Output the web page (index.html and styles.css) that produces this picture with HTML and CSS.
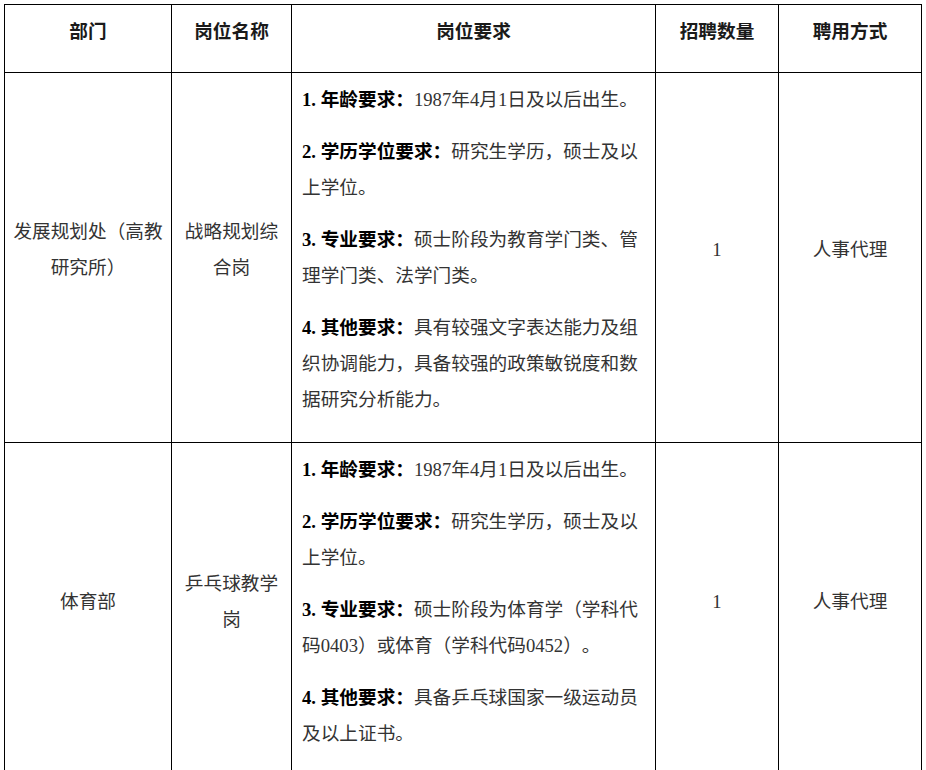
FILE: index.html
```html
<!DOCTYPE html>
<html lang="zh-CN">
<head>
<meta charset="utf-8">
<title>岗位要求</title>
<link rel="stylesheet" href="styles.css">
</head>
<body>
<table class="jobs">
  <colgroup>
    <col class="c-dept">
    <col class="c-post">
    <col class="c-req">
    <col class="c-num">
    <col class="c-way">
  </colgroup>
  <thead>
    <tr>
      <th>部门</th>
      <th>岗位名称</th>
      <th>岗位要求</th>
      <th>招聘数量</th>
      <th>聘用方式</th>
    </tr>
  </thead>
  <tbody>
    <tr>
      <td class="mid"><p>发展规划处（高教研究所）</p></td>
      <td class="mid"><p>战略规划综合岗</p></td>
      <td class="req">
        <p><b>1. 年龄要求：</b>1987年4月1日及以后出生。</p>
        <p><b>2. 学历学位要求：</b>研究生学历，硕士及以上学位。</p>
        <p><b>3. 专业要求：</b>硕士阶段为教育学门类、管理学门类、法学门类。</p>
        <p><b>4. 其他要求：</b>具有较强文字表达能力及组织协调能力，具备较强的政策敏锐度和数据研究分析能力。</p>
      </td>
      <td class="mid"><p>1</p></td>
      <td class="mid"><p>人事代理</p></td>
    </tr>
    <tr>
      <td class="mid"><p>体育部</p></td>
      <td class="mid"><p>乒乓球教学岗</p></td>
      <td class="req">
        <p><b>1. 年龄要求：</b>1987年4月1日及以后出生。</p>
        <p><b>2. 学历学位要求：</b>研究生学历，硕士及以上学位。</p>
        <p><b>3. 专业要求：</b>硕士阶段为体育学（学科代码0403）或体育（学科代码0452）。</p>
        <p><b>4. 其他要求：</b>具备乒乓球国家一级运动员及以上证书。</p>
      </td>
      <td class="mid"><p>1</p></td>
      <td class="mid"><p>人事代理</p></td>
    </tr>
  </tbody>
</table>
</body>
</html>
```

FILE: styles.css
```css
html, body {
  background: #ffffff;
}
body {
  margin: 4px 0 0 4px;
  font-family: "Liberation Serif", "Noto Sans CJK SC", serif;
  font-size: 18.67px;
  color: #333333;
  text-spacing-trim: space-all;
}
.jobs {
  border-collapse: collapse;
  table-layout: fixed;
  width: 917px;
}
.c-dept { width: 167px; }
.c-post { width: 120px; }
.c-req { width: 364px; }
.c-num { width: 123px; }
.c-way { width: 143px; }

.jobs th,
.jobs td {
  border: 1px solid #000000;
  padding: 9px 6px 8px 6px;
  line-height: 36px;
}
.jobs th {
  height: 50px;
  vertical-align: top;
  font-weight: bold;
  color: #1a1a1a;
  text-align: center;
}
.jobs td.mid {
  vertical-align: middle;
  text-align: center;
}
.jobs td.req {
  vertical-align: top;
  text-align: left;
  padding-left: 10px;
  padding-right: 8px;
}
.jobs p {
  margin: 0 0 16px 0;
}
.jobs b {
  color: #000000;
  font-weight: bold;
}
```
